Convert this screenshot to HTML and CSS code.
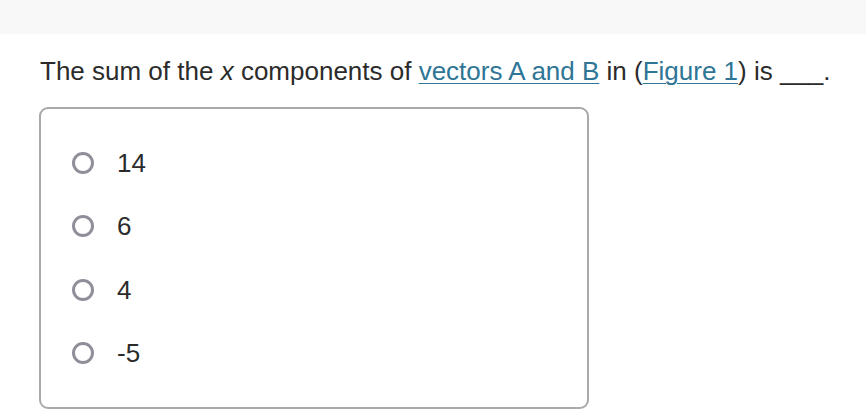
FILE: index.html
```html
<!DOCTYPE html>
<html>
<head>
<meta charset="utf-8">
<link rel="stylesheet" href="styles.css">
</head>
<body>
<div class="topbar"></div>
<div class="content">
  <p class="question">The sum of the <i>x</i> components of <a href="#" class="link">vectors A and B</a> in (<a href="#" class="link">Figure 1</a>) is <span class="blank">___</span>.</p>
  <div class="choices">
    <label class="choice"><span class="radio"></span><span class="label">14</span></label>
    <label class="choice"><span class="radio"></span><span class="label">6</span></label>
    <label class="choice"><span class="radio"></span><span class="label">4</span></label>
    <label class="choice"><span class="radio"></span><span class="label">-5</span></label>
  </div>
</div>
</body>
</html>
```

FILE: styles.css
```css
html, body {
  margin: 0;
  padding: 0;
  background: #ffffff;
  font-family: "Liberation Sans", Arial, sans-serif;
  color: #2b2b2b;
}
.topbar {
  height: 34px;
  background: #f8f8f8;
}
.content {
  padding: 0 0 0 39px;
}
.question {
  margin: 22px 0 0 1px;
  font-size: 26px;
  line-height: 30px;
  white-space: nowrap;
}
.question i {
  font-style: italic;
}
.link {
  color: #2e7596;
  text-decoration: underline;
  text-underline-offset: 3px;
  text-decoration-thickness: 1px;
}
.choices {
  margin-top: 21px;
  width: 550px;
  height: 302px;
  box-sizing: border-box;
  border: 2px solid #a9a9a9;
  border-radius: 9px;
  display: flex;
  flex-direction: column;
  padding: 42.5px 0 0 31px;
  gap: 41.5px;
}
.choice {
  display: flex;
  align-items: center;
  height: 22px;
}
.radio {
  width: 22px;
  height: 22px;
  border: 3.5px solid #8f8f99;
  border-radius: 50%;
  box-sizing: border-box;
  flex: none;
}
.label {
  margin-left: 23px;
  font-size: 26px;
  line-height: 30px;
}
```
